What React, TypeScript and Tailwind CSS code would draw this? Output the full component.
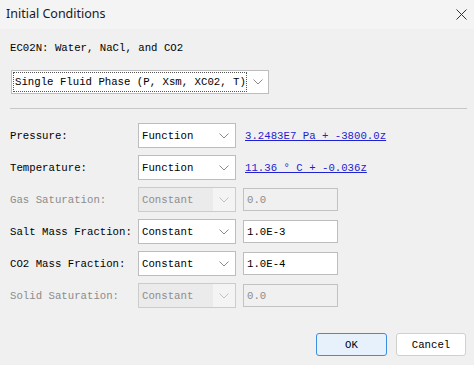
import React from "react";

const mono = "font-['Liberation_Mono','DejaVu_Sans_Mono',monospace] text-[10.7px] leading-[14px] whitespace-nowrap";

function Chevron({ color = "#808080" }: { color?: string }) {
  return (
    <svg width="10" height="6" viewBox="0 0 10 6" className="shrink-0">
      <polyline points="0.5,0.5 5,5 9.5,0.5" fill="none" stroke={color} strokeWidth="1" />
    </svg>
  );
}

function Select({ text, disabled }: { text: string; disabled?: boolean }) {
  return (
    <div
      className={
        "flex h-[25px] w-[98px] shrink-0 items-center border " +
        (disabled ? "border-[#cccccc] bg-[#f4f4f4]" : "border-[#bdbdbd] bg-white")
      }
    >
      <div
        className={
          "flex h-full flex-1 items-center pl-[3px] " +
          mono +
          (disabled ? " bg-[#ebebeb] text-[#8e8e8e]" : " text-black")
        }
      >
        {text}
      </div>
      <div className="flex h-full w-[22px] items-center justify-center">
        <Chevron color={disabled ? "#c4c4c4" : "#8a8a8a"} />
      </div>
    </div>
  );
}

type Row = {
  label: string;
  sel: string;
  link?: string;
  value?: string;
  disabled?: boolean;
};

const rows: Row[] = [
  { label: "Pressure:", sel: "Function", link: "3.2483E7 Pa + -3800.0z" },
  { label: "Temperature:", sel: "Function", link: "11.36 ° C + -0.036z" },
  { label: "Gas Saturation:", sel: "Constant", value: "0.0", disabled: true },
  { label: "Salt Mass Fraction:", sel: "Constant", value: "1.0E-3" },
  { label: "CO2 Mass Fraction:", sel: "Constant", value: "1.0E-4" },
  { label: "Solid Saturation:", sel: "Constant", value: "0.0", disabled: true },
];

export default function App() {
  return (
    <div className="flex h-[365px] w-[474px] flex-col overflow-hidden bg-[#f0f0f0]">
      {/* title bar */}
      <div className="flex h-[29px] shrink-0 items-center justify-between bg-[#f4f4f4] pl-[6px] pr-[7px]">
        <span className="font-['Noto_Sans','Open_Sans',sans-serif] text-[12.5px] text-[#1a1a1a]">
          Initial Conditions
        </span>
        <svg width="11" height="11" viewBox="0 0 11 11">
          <line x1="0.5" y1="0.5" x2="10.5" y2="10.5" stroke="#333" strokeWidth="1" />
          <line x1="10.5" y1="0.5" x2="0.5" y2="10.5" stroke="#333" strokeWidth="1" />
        </svg>
      </div>

      <div className="flex flex-1 flex-col pl-[10px] pr-[7px]">
        <div className={"mt-[12px] text-black " + mono}>EC02N: Water, NaCl, and CO2</div>

        {/* phase select */}
        <div className="ml-[1px] mt-[15px] flex h-[24px] w-[258px] items-center border border-[#bdbdbd] bg-white">
          <div className="flex h-full min-w-0 flex-1 items-center p-[1px]">
            <div
              className={
                "flex h-full w-full items-center overflow-hidden border border-dotted border-[#555] pl-[1px] text-black " +
                mono
              }
            >
              Single Fluid Phase (P, Xsm, XC02, T)
            </div>
          </div>
          <div className="flex h-full w-[20px] shrink-0 items-center justify-center">
            <Chevron color="#8a8a8a" />
          </div>
        </div>

        <div className="mt-[14px] border-t border-[#c6c6c6]" />

        <div className="mt-[14px] flex flex-col gap-[7px]">
          {rows.map((r) => (
            <div key={r.label} className="flex h-[25px] items-center">
              <div
                className={
                  "w-[128px] shrink-0 " + mono + (r.disabled ? " text-[#8c8c8c]" : " text-black")
                }
              >
                {r.label}
              </div>
              <Select text={r.sel} disabled={r.disabled} />
              {r.link ? (
                <a className={"ml-[9px] text-[#1f22d0] underline " + mono}>{r.link}</a>
              ) : (
                <div
                  className={
                    "ml-[7px] flex h-[23px] w-[95px] items-center border pl-[3px] " +
                    mono +
                    (r.disabled
                      ? " border-[#c2c2c2] bg-[#f0f0f0] text-[#8c8c8c]"
                      : " border-[#bdbdbd] bg-white text-black")
                  }
                >
                  {r.value}
                </div>
              )}
            </div>
          ))}
        </div>

        <div className="mt-[25px] flex justify-end gap-[9px] pr-[1px]">
          <button
            className={
              "flex h-[23px] w-[71px] items-center justify-center rounded-[3px] border border-[#3c8ee0] bg-[#e6f1fb] text-black " +
              mono
            }
          >
            OK
          </button>
          <button
            className={
              "flex h-[23px] w-[70px] items-center justify-center rounded-[3px] border border-[#d0d0d0] bg-white text-black " +
              mono
            }
          >
            Cancel
          </button>
        </div>
      </div>
    </div>
  );
}
